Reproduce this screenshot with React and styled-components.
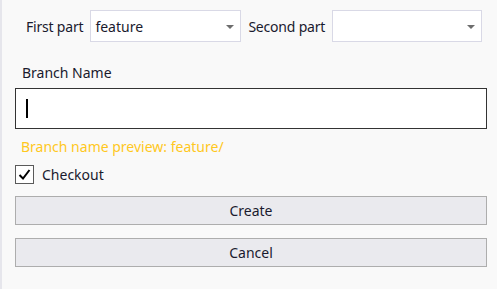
import React, { useState } from "react";
import styled, { createGlobalStyle } from "styled-components";

const GlobalStyle = createGlobalStyle`
  html, body {
    margin: 0;
    padding: 0;
    background: #f9f9f9;
  }
  body {
    font-family: "Noto Sans", "Open Sans", sans-serif;
    font-size: 14px;
    color: #1a1a2e;
  }
`;

const Panel = styled.div`
  width: 497px;
  height: 289px;
  box-sizing: border-box;
  border-left: 2px solid #e6e6ec;
  padding: 10px 10px 0 13px;
  display: flex;
  flex-direction: column;
`;

const TopRow = styled.div`
  display: flex;
  align-items: center;
  padding-left: 11px;
  height: 32px;
`;

const PartLabel = styled.span`
  margin-right: 7px;
  white-space: nowrap;
  letter-spacing: -0.2px;
`;

const Dropdown = styled.div`
  position: relative;
  width: ${p => p.width}px;
  height: 32px;
  box-sizing: border-box;
  border: 1px solid #d9d9e6;
  background: #fff;
  display: flex;
  align-items: center;
  padding-left: 4px;
  margin-right: ${p => p.gap || 0}px;
`;

const Arrow = styled.span`
  position: absolute;
  right: 6px;
  top: 14px;
  width: 0;
  height: 0;
  border-left: 4px solid transparent;
  border-right: 4px solid transparent;
  border-top: 4px solid #6d6d6d;
`;

const FieldLabel = styled.div`
  margin: 21px 0 0 7px;
  height: 19px;
  line-height: 19px;
`;

const TextBox = styled.div`
  margin-top: 6px;
  width: 472px;
  height: 41px;
  box-sizing: border-box;
  border: 1px solid #333;
  background: #fff;
  display: flex;
  align-items: center;
  padding-left: 10px;
`;

const Caret = styled.span`
  width: 2px;
  height: 19px;
  background: #000;
`;

const Preview = styled.div`
  margin: 8px 0 0 6px;
  color: #ffc81e;
  height: 19px;
  line-height: 19px;
`;

const CheckRow = styled.label`
  display: flex;
  align-items: center;
  margin-top: 7px;
  height: 22px;
`;

const Box = styled.span`
  width: 19px;
  height: 19px;
  box-sizing: border-box;
  border: 1px solid #5a5a5a;
  background: #fff;
  display: flex;
  align-items: center;
  justify-content: center;
  margin-right: 8px;
`;

const Button = styled.button`
  width: 472px;
  height: 29px;
  box-sizing: border-box;
  border: 1px solid #adadad;
  background: #eaeaee;
  font-family: inherit;
  font-size: 14px;
  color: #1a1a2e;
  padding: 0;
  margin-top: ${p => p.top}px;
`;

export default function App() {
  const [checked, setChecked] = useState(true);
  return (
    <>
      <GlobalStyle />
      <Panel>
        <TopRow>
          <PartLabel>First part</PartLabel>
          <Dropdown width={151} gap={7}>
            feature
            <Arrow />
          </Dropdown>
          <PartLabel>Second part</PartLabel>
          <Dropdown width={150}>
            <Arrow />
          </Dropdown>
        </TopRow>
        <FieldLabel>Branch Name</FieldLabel>
        <TextBox>
          <Caret />
        </TextBox>
        <Preview>Branch name preview: feature/</Preview>
        <CheckRow onClick={() => setChecked(!checked)}>
          <Box>
            {checked && (
              <svg width="13" height="13" viewBox="0 0 13 13">
                <path d="M1.5 7 L5 10.5 L11.5 2" fill="none" stroke="#000" strokeWidth="2" />
              </svg>
            )}
          </Box>
          Checkout
        </CheckRow>
        <Button top={11}>Create</Button>
        <Button top={13}>Cancel</Button>
      </Panel>
    </>
  );
}
